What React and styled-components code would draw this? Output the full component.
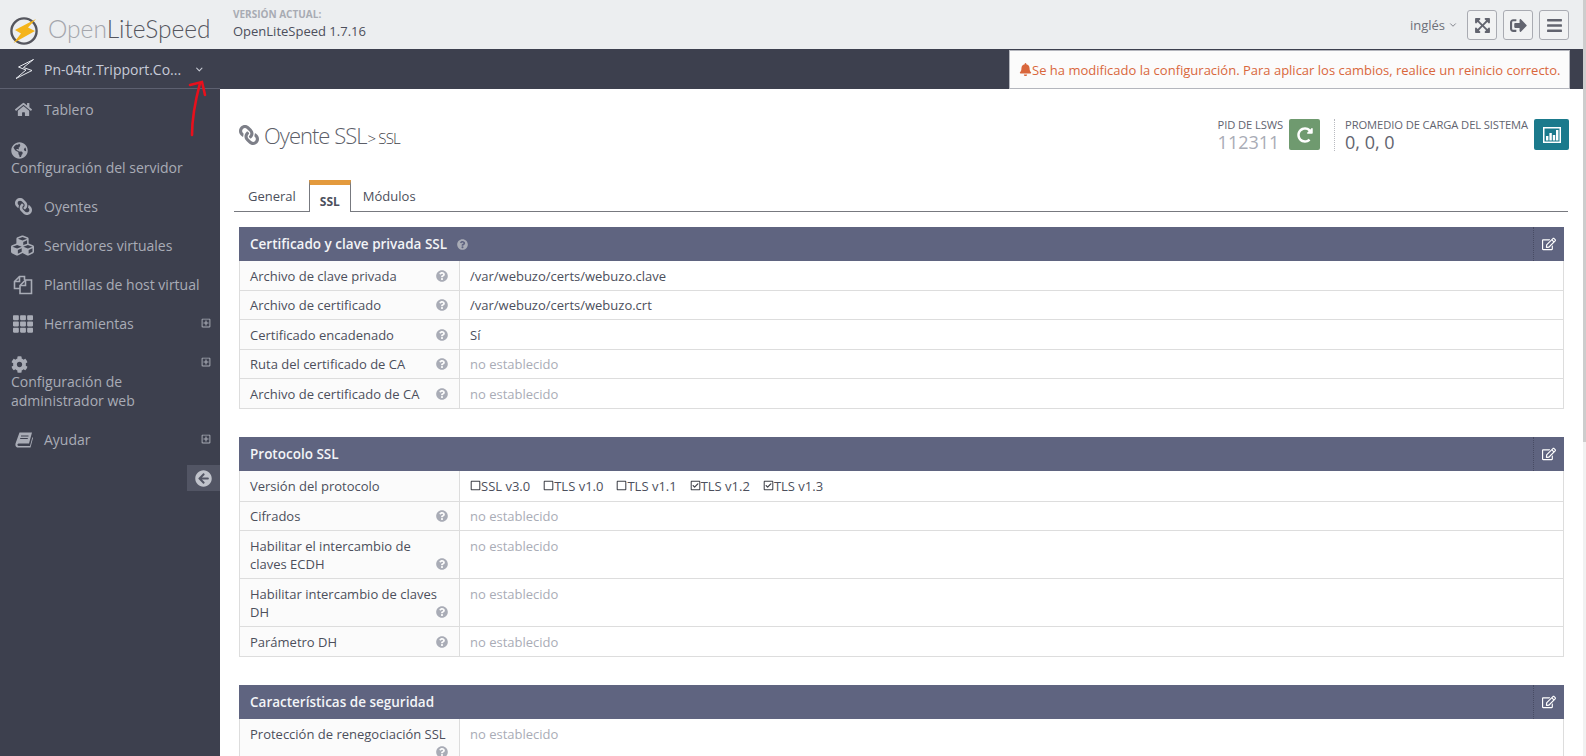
import React from "react";
import styled, { createGlobalStyle } from "styled-components";
import {
  FaArrowCircleLeft,
  FaBars,
  FaBell,
  FaCog,
  FaCubes,
  FaExpandArrowsAlt,
  FaGlobeAmericas,
  FaHome,
  FaLink,
  FaQuestionCircle,
  FaRedoAlt,
  FaRegCheckSquare,
  FaRegEdit,
  FaRegPlusSquare,
  FaRegSquare,
  FaSignOutAlt,
  FaTh,
} from "react-icons/fa";
import { ChevronDown } from "lucide-react";

const GlobalStyle = createGlobalStyle`
  html, body {
    margin: 0;
    height: 100%;
    overflow: hidden;
    background: #fff;
  }
  * {
    box-sizing: border-box;
  }
  body {
    font-family: "Open Sans", "Liberation Sans", sans-serif;
    font-size: 13px;
    color: #4c4f53;
  }
`;

const ChainIcon = styled(FaLink)`
  transform: scaleX(-1);
`;

function FilesIcon() {
  return (
    <svg width="20" height="20" viewBox="0 0 20 20" fill="none" stroke="currentColor" strokeWidth="1.6">
      <path d="M7 13.5 H1.5 V6.5 L6.5 1.5 H11.5 V5" />
      <path d="M1.5 6.5 H6.5 V1.5" />
      <path d="M7 18.5 H18.5 V5 H12.5 L7 10.5 Z" />
      <path d="M7 10.5 H12.5 V5" />
    </svg>
  );
}

function BookIcon() {
  return (
    <svg width="18" height="16" viewBox="0 0 18 16" fill="currentColor">
      <path d="M4.5 0.5 H17 L14 11.5 H3.5 C2 11.5 2 14 3.5 14 H15 L17.4 5 L18 6 L15.5 15.5 H3 C0.5 15.5 0 13 0.7 11 Z" />
      <path d="M6 4 H13.5 M5.2 6.5 H12.8" stroke="#3d404e" strokeWidth="1" />
    </svg>
  );
}

function ChartIcon() {
  return (
    <svg width="18" height="16" viewBox="0 0 18 16" fill="#fff">
      <path d="M0.75 0.75 H17.25 V15.25 H0.75 Z" fill="none" stroke="#fff" strokeWidth="1.5" />
      <rect x="3" y="9" width="2.4" height="4.5" />
      <rect x="6.4" y="6" width="2.4" height="7.5" />
      <rect x="9.8" y="8" width="2.4" height="5.5" />
      <rect x="13" y="3" width="2.4" height="10.5" />
    </svg>
  );
}

const menu = [
  { label: "Tablero", icon: FaHome, size: 17 },
  { label: "Configuración del servidor", icon: FaGlobeAmericas, size: 17, stacked: true },
  { label: "Oyentes", icon: ChainIcon, size: 17 },
  { label: "Servidores virtuales", icon: FaCubes, size: 23, shift: -4 },
  { label: "Plantillas de host virtual", icon: FilesIcon, shift: -2 },
  { label: "Herramientas", icon: FaTh, size: 20, shift: -2, more: true },
  { label: "Configuración de administrador web", icon: FaCog, size: 17, stacked: true, more: true },
  { label: "Ayudar", icon: BookIcon, more: true },
];

const sections = [
  {
    title: "Certificado y clave privada SSL",
    help: true,
    rows: [
      { label: "Archivo de clave privada", value: "/var/webuzo/certs/webuzo.clave" },
      { label: "Archivo de certificado", value: "/var/webuzo/certs/webuzo.crt" },
      { label: "Certificado encadenado", value: "Sí" },
      { label: "Ruta del certificado de CA" },
      { label: "Archivo de certificado de CA" },
    ],
  },
  {
    title: "Protocolo SSL",
    rows: [
      {
        label: "Versión del protocolo",
        noHelp: true,
        checks: [
          ["SSL v3.0", false],
          ["TLS v1.0", false],
          ["TLS v1.1", false],
          ["TLS v1.2", true],
          ["TLS v1.3", true],
        ],
      },
      { label: "Cifrados" },
      { label: "Habilitar el intercambio de claves ECDH" },
      { label: "Habilitar intercambio de claves DH" },
      { label: "Parámetro DH" },
    ],
  },
  {
    title: "Características de seguridad",
    rows: [{ label: "Protección de renegociación SSL" }],
  },
];

export default function App() {
  return (
    <>
      <GlobalStyle />
      <Page>
        <Screen>
          <TopBar>
            <Logo>
              <LogoMark />
              <LogoText>
                <LogoOpen>Open</LogoOpen>LiteSpeed
              </LogoText>
            </Logo>
            <Version>
              <VersionLabel>VERSIÓN ACTUAL:</VersionLabel>
              <VersionValue>OpenLiteSpeed 1.7.16</VersionValue>
            </Version>
            <TopActions>
              <Language>
                inglés <ChevronDown size={10} strokeWidth={2} />
              </Language>
              <ToolButton>
                <FaExpandArrowsAlt size={17} />
              </ToolButton>
              <ToolButton>
                <FaSignOutAlt size={17} />
              </ToolButton>
              <ToolButton>
                <FaBars size={17} />
              </ToolButton>
            </TopActions>
          </TopBar>
          <Workspace>
            <Sidebar>
              <SiteHeader>
                <SiteMark />
                <SiteName>Pn-04tr.Tripport.Co...</SiteName>
                <ChevronDown size={11} strokeWidth={2.4} />
              </SiteHeader>
              <Nav>
                {menu.map((item) => (
                  <NavItem key={item.label} $stacked={item.stacked}>
                    <NavIcon $shift={item.shift}>
                      <item.icon size={item.size} />
                    </NavIcon>
                    <NavLabel $stacked={item.stacked}>{item.label}</NavLabel>
                    {item.more && (
                      <NavMore>
                        <FaRegPlusSquare size={10} />
                      </NavMore>
                    )}
                  </NavItem>
                ))}
              </Nav>
              <CollapseRow>
                <CollapseTab>
                  <FaArrowCircleLeft size={17} />
                </CollapseTab>
              </CollapseRow>
            </Sidebar>
            <MainColumn>
              <Ribbon>
                <Notice>
                  <FaBell size={13} />
                  Se ha modificado la configuración. Para aplicar los cambios, realice un reinicio correcto.
                </Notice>
              </Ribbon>
              <Content>
                <PageHead>
                  <PageTitle>
                    <ChainIcon size={20} />
                    <TitleMain>Oyente SSL</TitleMain>
                    <TitleSub>&gt; SSL</TitleSub>
                  </PageTitle>
                  <Stats>
                    <Stat>
                      <StatText>
                        <StatLabel>PID DE LSWS</StatLabel>
                        <StatValue $muted>112311</StatValue>
                      </StatText>
                      <StatButton $color="#6f9a6f">
                        <FaRedoAlt size={16} />
                      </StatButton>
                    </Stat>
                    <StatDivider />
                    <Stat>
                      <StatText>
                        <StatLabel>PROMEDIO DE CARGA DEL SISTEMA</StatLabel>
                        <StatValue>0, 0, 0</StatValue>
                      </StatText>
                      <StatButton $color="#1b7a8c" $wide>
                        <ChartIcon />
                      </StatButton>
                    </Stat>
                  </Stats>
                </PageHead>
                <Tabs>
                  <Tab>General</Tab>
                  <Tab $active>SSL</Tab>
                  <Tab>Módulos</Tab>
                </Tabs>
                <Sections>
                  {sections.map((section) => (
                    <Section key={section.title}>
                      <SectionHead>
                        <SectionTitle>
                          {section.title}
                          {section.help && (
                            <SectionHelp>
                              <FaQuestionCircle size={11} />
                            </SectionHelp>
                          )}
                        </SectionTitle>
                        <SectionEdit>
                          <FaRegEdit size={14} />
                        </SectionEdit>
                      </SectionHead>
                      {section.rows.map((row) => (
                        <Row key={row.label}>
                          <RowLabel>
                            {row.label}
                            {!row.noHelp && (
                              <HelpIcon>
                                <FaQuestionCircle size={12} />
                              </HelpIcon>
                            )}
                          </RowLabel>
                          <RowValue $unset={!row.value && !row.checks}>
                            {row.checks ? (
                              <Checks>
                                {row.checks.map(([name, on]) => (
                                  <Check key={name}>
                                    {on ? <FaRegCheckSquare size={11} /> : <FaRegSquare size={11} />}
                                    {name}
                                  </Check>
                                ))}
                              </Checks>
                            ) : (
                              row.value || "no establecido"
                            )}
                          </RowValue>
                        </Row>
                      ))}
                    </Section>
                  ))}
                </Sections>
              </Content>
            </MainColumn>
          </Workspace>
          <RedArrow />
        </Screen>
        <ScrollTrack>
          <ScrollThumb />
        </ScrollTrack>
      </Page>
    </>
  );
}

function LogoMark() {
  return (
    <LogoSvg viewBox="0 0 28 28">
      <circle cx="14" cy="14" r="12.6" fill="none" stroke="#55565e" strokeWidth="2.4" />
      <path d="M26 2 L5 13 L11 16.5 L3.5 26 L25 14 L18 10.5 Z" fill="#f4b41a" />
    </LogoSvg>
  );
}

function SiteMark() {
  return (
    <SiteSvg viewBox="0 0 20 20">
      <path d="M18.5 0.5 L3.5 8 L11 11 L1 19.5 L17 11.5 L8.5 8.5 Z" fill="none" stroke="#e6e8ee" strokeWidth="1" strokeLinejoin="round" />
    </SiteSvg>
  );
}

function RedArrow() {
  return (
    <ArrowSvg viewBox="0 0 30 60">
      <path d="M6 57 C6 38 9 24 14 5" fill="none" stroke="#e8101c" strokeWidth="2.6" strokeLinecap="round" />
      <path d="M4 7 C8 6 12 5 16 4 C17 8 18 12 19 17" fill="none" stroke="#e8101c" strokeWidth="2.6" strokeLinecap="round" />
    </ArrowSvg>
  );
}

const Page = styled.div`
  display: flex;
  width: 100%;
  height: 100vh;
  overflow: hidden;
`;
const Screen = styled.div`
  position: relative;
  flex: 1;
  min-width: 0;
  display: flex;
  flex-direction: column;
`;
const ScrollTrack = styled.div`
  width: 3px;
  flex-shrink: 0;
  background: #f1f1f1;
`;
const ScrollThumb = styled.div`
  height: 442px;
  background: #cdcdcd;
`;

const TopBar = styled.header`
  height: 49px;
  flex-shrink: 0;
  display: flex;
  align-items: flex-start;
  background: #eceef0;
`;
const Logo = styled.div`
  width: 233px;
  height: 49px;
  display: flex;
  align-items: center;
  padding: 12px 0 0 10px;
  gap: 10px;
`;
const LogoSvg = styled.svg`
  width: 28px;
  height: 28px;
  flex-shrink: 0;
`;
const LogoText = styled.div`
  margin-top: -4px;
  font-family: "Lato", "Open Sans", sans-serif;
  font-size: 24.5px;
  font-weight: 300;
  color: #55565e;
`;
const LogoOpen = styled.span`
  color: #a4a6ac;
`;
const Version = styled.div`
  padding-top: 9px;
`;
const VersionLabel = styled.div`
  font-size: 10px;
  line-height: 11px;
  font-weight: 700;
  color: #a8abb3;
`;
const VersionValue = styled.div`
  margin-top: 4px;
  font-size: 13px;
  line-height: 15px;
  color: #4c4f5c;
`;
const TopActions = styled.div`
  margin-left: auto;
  padding: 10px 14px 0 0;
  display: flex;
  align-items: center;
  gap: 6px;
`;
const Language = styled.div`
  display: flex;
  align-items: center;
  gap: 3px;
  margin-right: 3px;
  font-size: 13px;
  color: #6e7079;
`;
const ToolButton = styled.button`
  width: 30px;
  height: 30px;
  padding: 0;
  display: flex;
  align-items: center;
  justify-content: center;
  border: 1px solid #a9abb2;
  border-radius: 3px;
  background: #f1f2f3;
  color: #62646f;
`;

const Workspace = styled.div`
  flex: 1;
  min-height: 0;
  display: flex;
`;
const Sidebar = styled.aside`
  width: 220px;
  flex-shrink: 0;
  background: #3d404e;
  color: #a9acb6;
`;
const SiteHeader = styled.div`
  height: 40px;
  display: flex;
  align-items: center;
  padding: 1px 15px 0 15px;
  border-bottom: 1px solid #5d6070;
  color: #c7cad4;
`;
const SiteSvg = styled.svg`
  width: 20px;
  height: 20px;
  flex-shrink: 0;
`;
const SiteName = styled.div`
  width: 156px;
  margin-left: 9px;
  font-size: 14px;
  color: #c7cbd8;
`;
const Nav = styled.nav`
  display: flex;
  flex-direction: column;
  padding-top: 1px;
`;
const NavItem = styled.div`
  position: relative;
  display: flex;
  flex-direction: ${(p) => (p.$stacked ? "column" : "row")};
  align-items: ${(p) => (p.$stacked ? "flex-start" : "center")};
  min-height: 39px;
  padding: ${(p) => (p.$stacked ? "13px 11px 10px" : "0 0 0 15px")};
  font-size: 14px;
  line-height: 19px;
`;
const NavIcon = styled.span`
  width: 29px;
  display: flex;
  align-items: center;
  margin-left: ${(p) => p.$shift || 0}px;
  margin-right: ${(p) => -(p.$shift || 0)}px;
  color: #a9acb6;
`;
const NavLabel = styled.span`
  margin-top: ${(p) => (p.$stacked ? "-1px" : "0")};
`;
const NavMore = styled.span`
  position: absolute;
  top: 14px;
  right: 9px;
  display: flex;
`;
const CollapseRow = styled.div`
  display: flex;
  justify-content: flex-end;
  margin-top: 6px;
`;
const CollapseTab = styled.div`
  width: 33px;
  height: 26px;
  display: flex;
  align-items: center;
  justify-content: center;
  background: #525564;
  color: #c0c3cb;
`;

const MainColumn = styled.main`
  flex: 1;
  min-width: 0;
  display: flex;
  flex-direction: column;
`;
const Ribbon = styled.div`
  height: 40px;
  flex-shrink: 0;
  display: flex;
  justify-content: flex-end;
  align-items: flex-end;
  padding-right: 13px;
  background: #3d404e;
`;
const Notice = styled.div`
  width: 561px;
  height: 39px;
  display: flex;
  align-items: center;
  padding-left: 9px;
  background: #fbfbfb;
  border: 1px solid #b4b6bd;
  font-size: 13px;
  color: #d9673c;
  white-space: nowrap;
`;
const Content = styled.div`
  flex: 1;
  min-height: 0;
  padding: 30px 15px 0 14px;
  background: #fff;
`;
const PageHead = styled.div`
  height: 61px;
  display: flex;
  justify-content: space-between;
  align-items: flex-start;
`;
const PageTitle = styled.h1`
  margin: 0 0 0 5px;
  display: flex;
  align-items: baseline;
  font-weight: 300;
  color: #5c5e68;
  svg {
    align-self: center;
    color: #7d7f88;
  }
`;
const TitleMain = styled.span`
  margin-left: 5px;
  font-size: 22px;
  line-height: 32px;
  letter-spacing: -1px;
`;
const TitleSub = styled.span`
  margin-left: 1px;
  font-size: 15px;
  letter-spacing: -0.8px;
  color: #3f4148;
`;
const Stats = styled.div`
  display: flex;
  align-items: flex-start;
  margin-right: -1px;
`;
const Stat = styled.div`
  display: flex;
  align-items: flex-start;
`;
const StatText = styled.div`
  margin-right: 6px;
`;
const StatLabel = styled.div`
  font-size: 11.2px;
  line-height: 11px;
  color: #62646f;
  letter-spacing: -0.1px;
`;
const StatValue = styled.div`
  margin-top: 1px;
  font-size: 18px;
  line-height: 22px;
  color: ${(p) => (p.$muted ? "#a9acb6" : "#62646f")};
`;
const StatButton = styled.div`
  width: ${(p) => (p.$wide ? "35px" : "31px")};
  height: 31px;
  display: flex;
  align-items: center;
  justify-content: center;
  border-radius: 2px;
  background: ${(p) => p.$color};
  color: #fff;
`;
const StatDivider = styled.div`
  width: 0;
  height: 32px;
  margin: 0 10px 0 14px;
  border-left: 1px dotted #b8bac0;
`;
const Tabs = styled.div`
  display: flex;
  height: 32px;
  border-bottom: 1px solid #77797f;
`;
const Tab = styled.div`
  height: ${(p) => (p.$active ? "32px" : "31px")};
  display: flex;
  align-items: center;
  padding: ${(p) => (p.$active ? "5px 10px 0" : "0 13px 0 12px")};
  font-size: ${(p) => (p.$active ? "12px" : "13px")};
  font-weight: ${(p) => (p.$active ? 700 : 400)};
  color: #4c4f5c;
  background: #fff;
  &:first-child {
    padding-left: 14px;
  }
  ${(p) =>
    p.$active &&
    `
    width: 42px;
    justify-content: center;
    border-top: 5px solid #e39a3d;
    border-left: 1px solid #77797f;
    border-right: 1px solid #77797f;
  `}
`;
const Sections = styled.div`
  display: flex;
  flex-direction: column;
  gap: 28.5px;
  margin: 15px 4px 0 5px;
`;
const Section = styled.section`
  border-bottom: 1px solid #ddd;
`;
const SectionHead = styled.div`
  height: 34px;
  display: flex;
  align-items: center;
  justify-content: space-between;
  background: #5f6480;
  color: #fff;
`;
const SectionTitle = styled.h2`
  margin: 0;
  padding-left: 11px;
  display: flex;
  align-items: center;
  font-size: 13.5px;
  font-weight: 600;
  color: #f3f4f7;
`;
const SectionHelp = styled.span`
  display: flex;
  margin-left: 10px;
  color: #a9acb6;
`;
const SectionEdit = styled.span`
  width: 31px;
  height: 34px;
  display: flex;
  align-items: center;
  justify-content: center;
  border-left: 1px dotted #474b63;
`;
const Row = styled.div`
  display: grid;
  grid-template-columns: 220px 1fr;
  border-left: 1px solid #ddd;
  border-right: 1px solid #ddd;
  & + & {
    border-top: 1px solid #ddd;
  }
  line-height: 18.5px;
`;
const RowLabel = styled.div`
  display: flow-root;
  padding: 5.5px 10px 4.5px;
  border-right: 1px solid #ddd;
  background: #fbfbfb;
  color: #4c4f5c;
`;
const HelpIcon = styled.span`
  float: right;
  margin: 3px 1px 0 0;
  display: flex;
  color: #a9acb6;
`;
const RowValue = styled.div`
  padding: 5.5px 10px 4.5px;
  background: #fff;
  color: ${(p) => (p.$unset ? "#a9acb6" : "#4c4f5c")};
`;
const Checks = styled.div`
  display: flex;
  gap: 13px;
  min-height: 19.5px;
`;
const Check = styled.span`
  display: flex;
  align-items: center;
  height: 18.5px;
  svg {
    flex-shrink: 0;
    color: #3f4148;
  }
`;
const ArrowSvg = styled.svg`
  position: absolute;
  left: 186px;
  top: 78px;
  width: 30px;
  height: 60px;
`;
